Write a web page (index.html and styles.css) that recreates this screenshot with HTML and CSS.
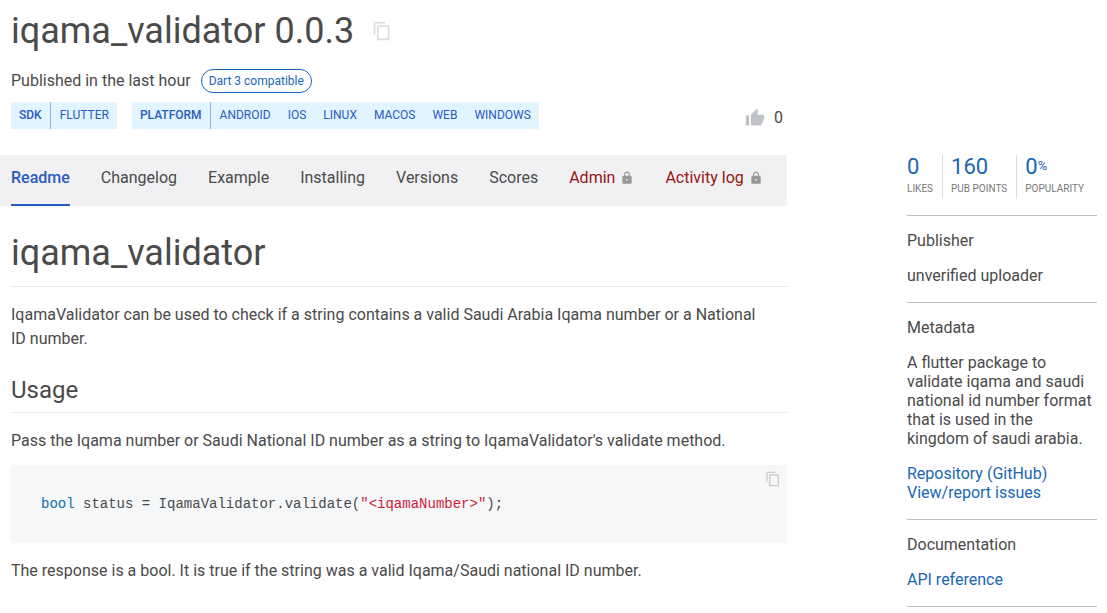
FILE: index.html
```html
<!DOCTYPE html>
<html lang="en">
<head>
  <meta charset="UTF-8" />
  <meta name="viewport" content="width=device-width, initial-scale=1.0"/>
  <title>iqama_validator | Dart Package</title>
  <link rel="stylesheet" href="styles.css">
</head>
<body>

  <div class="page">
    <header class="pkg-header">
      <div class="title-row">
        <h1 class="title">iqama_validator 0.0.3</h1>
        <button class="copy-btn" type="button" aria-label="Copy package name">
          <svg width="20" height="20" viewBox="0 0 24 24"><path fill="currentColor" d="M16 1H4c-1.100 0-2 .9-2 2v14h2V3h12V1zm3 4H8c-1.100 0-2 .9-2 2v14c0 1.100.9 2 2 2h11c1.100 0 2-.9 2-2V7c0-1.100-.9-2-2-2zm0 16H8V7h11v14z"/></svg>
        </button>
      </div>
      <div class="published">
        <span>Published in the last hour</span>
        <span class="badge">Dart 3 compatible</span>
      </div>
      <div class="tags-row">
        <div class="tags">
          <span class="tag tag-main">SDK</span>
          <a class="tag" href="#flutter">FLUTTER</a>
        </div>
        <div class="tags">
          <span class="tag tag-main">PLATFORM</span>
          <a class="tag" href="#android">ANDROID</a>
          <a class="tag" href="#ios">IOS</a>
          <a class="tag" href="#linux">LINUX</a>
          <a class="tag" href="#macos">MACOS</a>
          <a class="tag" href="#web">WEB</a>
          <a class="tag" href="#windows">WINDOWS</a>
        </div>
        <button class="like-btn" type="button" aria-label="Like this package">
          <svg width="20" height="20" viewBox="0 0 24 24"><path fill="#c0c3c9" d="M1 21h4V9H1v12zm22-11c0-1.100-.9-2-2-2h-6.310l.95-4.570.03-.32c0-.41-.17-.79-.44-1.060L14.170 1 7.590 7.590C7.220 7.950 7 8.450 7 9v10c0 1.100.9 2 2 2h9c.83 0 1.540-.5 1.840-1.220l3.020-7.050c.09-.23.14-.47.14-.73v-2z"/></svg>
          <span>0</span>
        </button>
      </div>
    </header>

    <main class="content">
      <nav class="tabs">
        <a class="tab active" href="#readme">Readme</a>
        <a class="tab" href="#changelog">Changelog</a>
        <a class="tab" href="#example">Example</a>
        <a class="tab" href="#installing">Installing</a>
        <a class="tab" href="#versions">Versions</a>
        <a class="tab" href="#scores">Scores</a>
        <a class="tab private" href="#admin">Admin
          <svg width="14" height="14" viewBox="0 0 24 24"><path fill="#999" fill-rule="evenodd" d="M18 8h-1V6c0-2.760-2.240-5-5-5S7 3.240 7 6v2H6c-1.100 0-2 .9-2 2v10c0 1.100.9 2 2 2h12c1.100 0 2-.9 2-2V10c0-1.100-.9-2-2-2zM12 16.500a1.500 1.500 0 1 1 0-3 1.500 1.500 0 0 1 0 3zM15.100 8H8.900V6c0-1.710 1.390-3.100 3.100-3.100s3.100 1.390 3.100 3.100v2z"/></svg>
        </a>
        <a class="tab private" href="#activity-log">Activity log
          <svg width="14" height="14" viewBox="0 0 24 24"><path fill="#999" fill-rule="evenodd" d="M18 8h-1V6c0-2.760-2.240-5-5-5S7 3.240 7 6v2H6c-1.100 0-2 .9-2 2v10c0 1.100.9 2 2 2h12c1.100 0 2-.9 2-2V10c0-1.100-.9-2-2-2zM12 16.500a1.500 1.500 0 1 1 0-3 1.500 1.500 0 0 1 0 3zM15.100 8H8.900V6c0-1.710 1.390-3.100 3.100-3.100s3.100 1.390 3.100 3.100v2z"/></svg>
        </a>
      </nav>

      <article class="readme" id="readme">
        <h1>iqama_validator</h1>
        <p>IqamaValidator can be used to check if a string contains a valid Saudi Arabia Iqama number or a National ID number.</p>
        <h2>Usage</h2>
        <p>Pass the Iqama number or Saudi National ID number as a string to IqamaValidator's validate method.</p>
        <div class="code">
          <pre><code><span class="type">bool</span> status = IqamaValidator.validate(<span class="string">"&lt;iqamaNumber&gt;"</span>);</code></pre>
          <button class="copy-btn code-copy" type="button" aria-label="Copy code">
            <svg width="16" height="16" viewBox="0 0 24 24"><path fill="currentColor" d="M16 1H4c-1.100 0-2 .9-2 2v14h2V3h12V1zm3 4H8c-1.100 0-2 .9-2 2v14c0 1.100.9 2 2 2h11c1.100 0 2-.9 2-2V7c0-1.100-.9-2-2-2zm0 16H8V7h11v14z"/></svg>
          </button>
        </div>
        <p>The response is a bool. It is true if the string was a valid Iqama/Saudi national ID number.</p>
      </article>
    </main>

    <aside class="sidebar">
      <a class="scores" href="#scores">
        <span class="score"><span class="value">0</span><span class="label">LIKES</span></span>
        <span class="score"><span class="value">160</span><span class="label">PUB POINTS</span></span>
        <span class="score"><span class="value">0<sup>%</sup></span><span class="label">POPULARITY</span></span>
      </a>
      <section class="info">
        <h3>Publisher</h3>
        <p>unverified uploader</p>
      </section>
      <section class="info">
        <h3>Metadata</h3>
        <p>A flutter package to validate iqama and saudi national id number format that is used in the kingdom of saudi arabia.</p>
        <p>
          <a href="#repository">Repository (GitHub)</a><br>
          <a href="#issues">View/report issues</a>
        </p>
      </section>
      <section class="info">
        <h3>Documentation</h3>
        <p><a href="#api">API reference</a></p>
      </section>
      <section class="info"></section>
    </aside>
  </div>

</body>
</html>
```

FILE: styles.css
```css
* {
  box-sizing: border-box;
}

body {
  margin: 0;
  font-family: Roboto, "Liberation Sans", sans-serif;
  font-size: 16px;
  line-height: 24px;
  color: #4a4a4a;
  background-color: #fff;
}

a {
  color: #1967b2;
  text-decoration: none;
}

button {
  padding: 0;
  border: none;
  background: none;
  font: inherit;
  color: inherit;
  cursor: pointer;
}

svg {
  display: block;
}

h1, h2, h3, p, pre {
  margin: 0;
  font-weight: 400;
}

.page {
  display: grid;
  grid-template-columns: minmax(0, 1fr) 190px;
  column-gap: 120px;
  padding-right: 10px;
}

.pkg-header {
  padding: 9px 0 25px 11px;
}

.title-row {
  display: flex;
  align-items: center;
  gap: 18px;
}

.title {
  font-size: 36px;
  line-height: 44px;
}

.copy-btn {
  color: #dcdcdc;
}

.published {
  display: flex;
  align-items: center;
  gap: 10px;
  margin-top: 16px;
}

.badge {
  padding: 0 7px;
  border: 1px solid #1967b2;
  border-radius: 12px;
  font-size: 12px;
  line-height: 22px;
  color: #1967b2;
}

.tags-row {
  display: flex;
  align-items: flex-start;
  gap: 15px;
  margin-top: 9px;
}

.tags {
  display: flex;
  gap: 1px;
  background-color: #e1f4ff;
}

.tag {
  padding: 0 8px;
  font-size: 12px;
  line-height: 27px;
  color: #2a5bc0;
}

.tag-main {
  border-right: 1px solid #8fb0e4;
  font-weight: 500;
}

.like-btn {
  display: flex;
  align-items: center;
  gap: 9px;
  margin: 4px 4px 0 auto;
}

.content {
  grid-column: 1;
}

.tabs {
  display: flex;
  gap: 31px;
  padding-left: 11px;
  background-color: #f1f1f3;
}

.tab {
  display: flex;
  align-items: center;
  gap: 5px;
  padding: 11px 0 14px;
  border-bottom: 2px solid transparent;
  white-space: nowrap;
  color: #4a4a4a;
}

.tab.active {
  border-color: #2a5bc0;
  font-weight: 500;
  color: #2a5bc0;
}

.tab.private {
  color: #961414;
}

.readme {
  padding-left: 11px;
}

.readme h1,
.readme h2 {
  border-bottom: 1px solid #e4e6e8;
}

.readme h1 {
  padding: 25px 0 10px;
  font-size: 36px;
  line-height: 45px;
}

.readme h2 {
  padding: 12px 0 7px;
  font-size: 24px;
  line-height: 30px;
}

.readme p {
  margin: 16px 0 12px;
  padding-right: 16px;
}

.code {
  position: relative;
  padding: 26px 30px 27px;
  background-color: #f5f7f9;
}

.code pre {
  overflow-x: auto;
}

.code code {
  font-family: "Liberation Mono", monospace;
  font-size: 14px;
}

.type {
  color: #1170ad;
}

.string {
  color: #d01c3a;
}

.code-copy {
  position: absolute;
  top: 6px;
  right: 6px;
  color: #ccc;
}

.sidebar {
  grid-column: 2;
}

.scores {
  display: flex;
  padding-bottom: 16px;
}

.score {
  padding: 0 9px 0 8px;
  border-right: 1px solid #dcdcdc;
}

.score:first-child {
  padding-left: 0;
}

.score:last-child {
  padding-right: 0;
  border-right: none;
}

.value,
.label {
  display: block;
  white-space: nowrap;
}

.value {
  font-size: 22px;
}

.value sup {
  font-size: 13px;
  line-height: 0;
  vertical-align: 4px;
}

.label {
  font-size: 10px;
  line-height: 20px;
  color: #777;
}

.info {
  padding-bottom: 17px;
  border-top: 1px solid #c0c0c0;
  line-height: 19px;
}

.info h3,
.info p {
  font-size: 16px;
}

.info h3 {
  margin-top: 15px;
}

.info p {
  margin-top: 16px;
}
```
